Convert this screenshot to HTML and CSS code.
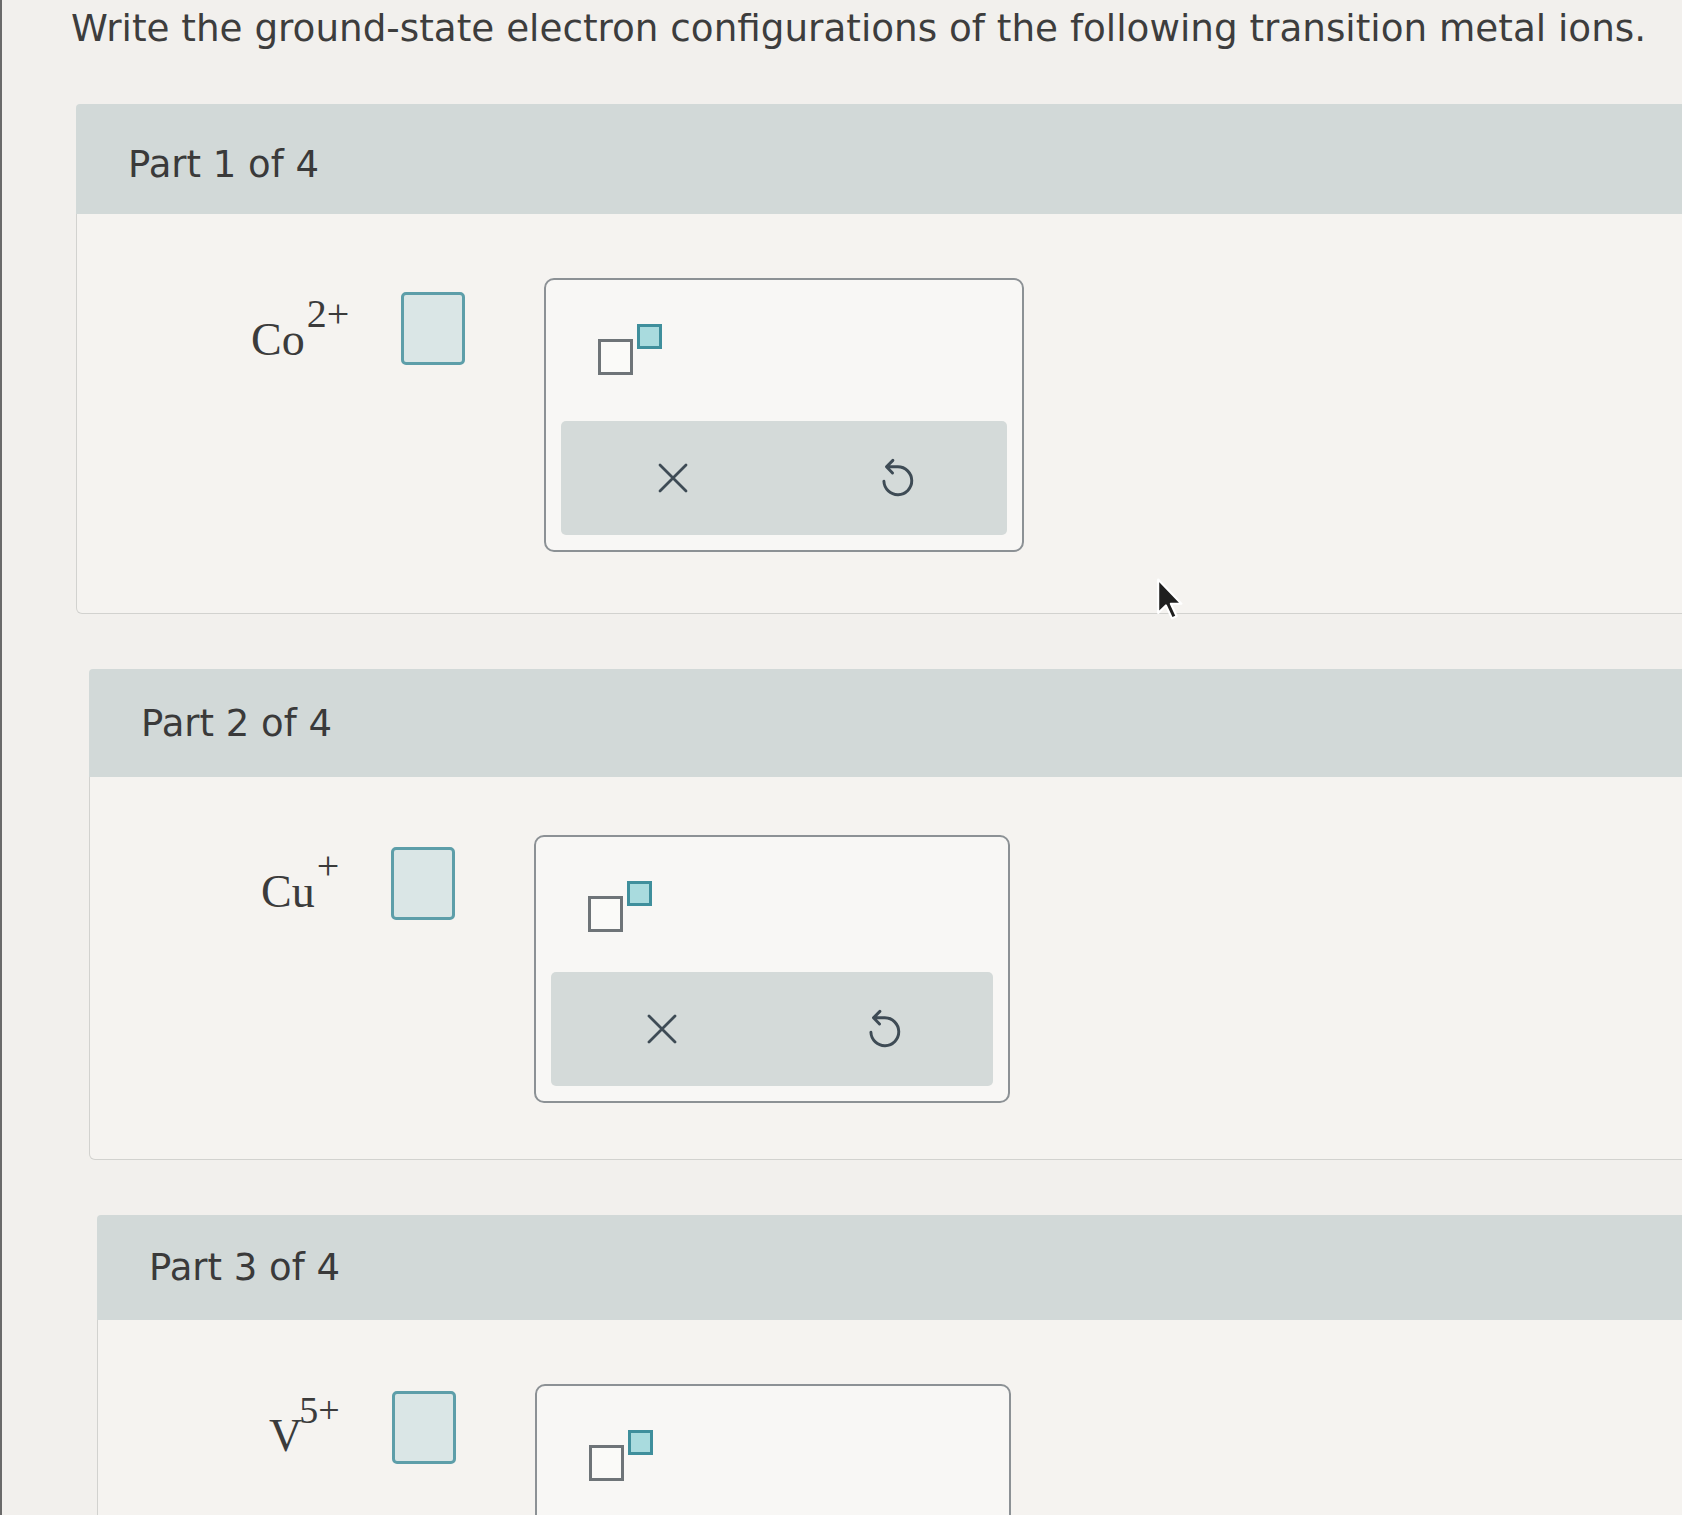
FILE: index.html
```html
<!DOCTYPE html>
<html lang="en">
<head>
    <meta charset="UTF-8">
    <meta name="viewport" content="width=device-width, initial-scale=1.0">
    <title>Electron configurations</title>
    <link rel="stylesheet" href="styles.css">
</head>
<body>
    <h1 class="prompt">Write the ground-state electron configurations of the following transition metal ions.</h1>

    <main class="parts">
        <section class="part part-1">
            <div class="part-head">Part 1 of 4</div>
            <div class="part-body">
                <div class="answer-row">
                    <div class="ion">Co<sup>2+</sup></div>
                    <div class="answer-box"></div>
                    <div class="palette">
                        <div class="palette-keys">
                            <span class="sup-key"><span class="base-sq"></span><span class="exp-sq"></span></span>
                        </div>
                        <div class="palette-bar">
                            <button class="tool" title="Clear">
                                <svg width="34" height="34" viewBox="0 0 34 34"><path d="M4 4 L30 30 M30 4 L4 30" stroke="currentColor" stroke-width="2.8" stroke-linecap="round" fill="none"/></svg>
                            </button>
                            <button class="tool" title="Undo">
                                <svg width="44" height="44" viewBox="0 0 24 24"><path d="M13 5.9 A7.6 7.6 0 1 1 5.4 13.8 M13 5.9 H7 M10.3 2.4 L6.8 5.9 L10.1 9.3" stroke="currentColor" stroke-width="1.6" stroke-linecap="round" stroke-linejoin="round" fill="none"/></svg>
                            </button>
                        </div>
                    </div>
                </div>
            </div>
        </section>

        <section class="part part-2">
            <div class="part-head">Part 2 of 4</div>
            <div class="part-body">
                <div class="answer-row">
                    <div class="ion">Cu<sup>+</sup></div>
                    <div class="answer-box"></div>
                    <div class="palette">
                        <div class="palette-keys">
                            <span class="sup-key"><span class="base-sq"></span><span class="exp-sq"></span></span>
                        </div>
                        <div class="palette-bar">
                            <button class="tool" title="Clear">
                                <svg width="34" height="34" viewBox="0 0 34 34"><path d="M4 4 L30 30 M30 4 L4 30" stroke="currentColor" stroke-width="2.8" stroke-linecap="round" fill="none"/></svg>
                            </button>
                            <button class="tool" title="Undo">
                                <svg width="44" height="44" viewBox="0 0 24 24"><path d="M13 5.9 A7.6 7.6 0 1 1 5.4 13.8 M13 5.9 H7 M10.3 2.4 L6.8 5.9 L10.1 9.3" stroke="currentColor" stroke-width="1.6" stroke-linecap="round" stroke-linejoin="round" fill="none"/></svg>
                            </button>
                        </div>
                    </div>
                </div>
            </div>
        </section>

        <section class="part part-3">
            <div class="part-head">Part 3 of 4</div>
            <div class="part-body">
                <div class="answer-row">
                    <div class="ion">V<sup>5+</sup></div>
                    <div class="answer-box"></div>
                    <div class="palette">
                        <div class="palette-keys">
                            <span class="sup-key"><span class="base-sq"></span><span class="exp-sq"></span></span>
                        </div>
                        <div class="palette-bar">
                            <button class="tool" title="Clear">
                                <svg width="34" height="34" viewBox="0 0 34 34"><path d="M4 4 L30 30 M30 4 L4 30" stroke="currentColor" stroke-width="2.8" stroke-linecap="round" fill="none"/></svg>
                            </button>
                            <button class="tool" title="Undo">
                                <svg width="44" height="44" viewBox="0 0 24 24"><path d="M13 5.9 A7.6 7.6 0 1 1 5.4 13.8 M13 5.9 H7 M10.3 2.4 L6.8 5.9 L10.1 9.3" stroke="currentColor" stroke-width="1.6" stroke-linecap="round" stroke-linejoin="round" fill="none"/></svg>
                            </button>
                        </div>
                    </div>
                </div>
            </div>
        </section>
    </main>

    <!-- mouse pointer left over the page -->
    <svg class="cursor" width="28" height="44" viewBox="0 0 13 20">
        <path d="M1 1 L1 16.5 L4.6 13 L7.4 19 L9.6 18 L6.9 12.2 L11.8 12.2 Z" fill="#1f1f1f" stroke="#ffffff" stroke-width="1" stroke-linejoin="round"/>
    </svg>
</body>
</html>
```

FILE: styles.css
```css
* {
    margin: 0;
    padding: 0;
    box-sizing: border-box;
}
html, body {
    overflow: hidden;
}
body {
    font-family: 'DejaVu Sans', Verdana, sans-serif;
    background: #f2f0ed;
    color: #3a3a3a;
    border-left: 2px solid #6a6a6a;
    min-height: 1515px;
    position: relative;
}
.prompt {
    font-size: 37.3px;
    font-weight: normal;
    line-height: 56px;
    padding-left: 69px;
    margin-bottom: 48px;
    color: #3d3d3d;
    white-space: nowrap;
}
.part {
    margin-right: -60px;
    margin-bottom: 55px;
}
.part-1 {
    margin-left: 74px;
}
.part-2 {
    margin-left: 87px;
}
.part-3 {
    margin-left: 95px;
}
.part-head {
    height: 108px;
    background: #d2d9d8;
    display: flex;
    align-items: center;
    padding-left: 52px;
    font-size: 37px;
    color: #3a3a3a;
    border-radius: 4px 4px 0 0;
}
.part-1 .part-head {
    height: 110px;
    padding-top: 10px;
}
.part-3 .part-head {
    height: 105px;
}
.part-body {
    height: 392px;
    background: #f5f3f0;
    border: 1px solid #d2d2cf;
    border-top: none;
    border-radius: 0 0 6px 6px;
    padding-top: 64px;
}
.part-1 .part-body {
    height: 400px;
}
.part-2 .part-body {
    height: 383px;
    padding-top: 58px;
}
.answer-row {
    display: flex;
    align-items: flex-start;
    padding-left: 171px;
}
.part-1 .answer-row {
    padding-left: 174px;
}
.ion {
    font-family: 'Liberation Serif', 'Times New Roman', serif;
    font-size: 46px;
    line-height: 46px;
    margin-top: 36px;
    color: #3b3b3b;
}
.part-2 .ion {
    margin-top: 31px;
}
.part-3 .ion {
    margin-top: 26px;
}
.ion sup {
    font-size: 40px;
    line-height: 0;
    vertical-align: 28px;
    margin-left: 2px;
}
.part-3 .ion sup {
    font-size: 38px;
    margin-left: -3px;
}
.answer-box {
    width: 64px;
    height: 73px;
    margin: 14px 0 0 52px;
    border: 3px solid #5d9ea9;
    border-radius: 5px;
    background: #dae6e6;
}
.part-2 .answer-box {
    margin-top: 12px;
}
.part-3 .answer-box {
    margin-top: 7px;
}
.palette {
    width: 476px;
    height: 274px;
    margin-left: 79px;
    border: 2px solid #8c9195;
    border-radius: 10px;
    background: #f8f7f5;
    display: flex;
    flex-direction: column;
    justify-content: space-between;
    padding: 0 15px 15px;
}
.part-1 .palette {
    width: 480px;
}
.part-2 .palette {
    height: 268px;
}
.palette-keys {
    padding: 44px 0 0 37px;
}
.sup-key {
    display: inline-flex;
    align-items: flex-start;
}
.base-sq {
    width: 35px;
    height: 36px;
    margin-top: 15px;
    border: 3px solid #6e7478;
    background: #fafaf8;
}
.exp-sq {
    width: 25px;
    height: 25px;
    margin-left: 4px;
    border: 3px solid #3f8f9c;
    background: #a9dbde;
}
.palette-bar {
    height: 114px;
    background: #d4dad9;
    border-radius: 5px;
    display: grid;
    grid-template-columns: 1fr 1fr;
    align-items: center;
    justify-items: center;
}
.tool {
    background: none;
    border: none;
    display: flex;
    color: #3e4b55;
    cursor: pointer;
}
.cursor {
    position: absolute;
    left: 1154px;
    top: 577px;
}
```
